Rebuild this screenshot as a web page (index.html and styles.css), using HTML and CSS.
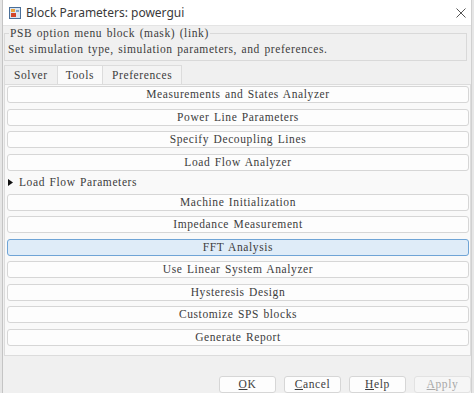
FILE: index.html
```html
<!DOCTYPE html>
<html lang="en">
<head>
    <title>Block Parameters: powergui</title>
    <meta charset="UTF-8">
    <link rel="stylesheet" href="styles.css">
</head>
<body>
    <div class="window">
        <div class="titlebar">
            <svg class="app-icon" width="12" height="12" viewBox="0 0 12 12">
                <rect x="0.5" y="0.5" width="11" height="11" fill="#dbe6f2" stroke="#4a6f99"/>
                <rect x="2" y="2" width="4" height="3" fill="#e9a23b"/>
                <rect x="2" y="6" width="5" height="4" fill="#d2462a"/>
                <rect x="7" y="3" width="3" height="2" fill="#7fa3c9"/>
            </svg>
            <span class="title">Block Parameters: powergui</span>
            <svg class="close" width="10" height="10" viewBox="0 0 10 10">
                <path d="M0.5 0.5 L9.5 9.5 M9.5 0.5 L0.5 9.5" stroke="#555" stroke-width="1"/>
            </svg>
        </div>

        <fieldset class="desc">
            <legend>PSB option menu block (mask) (link)</legend>
            <p>Set simulation type, simulation parameters, and preferences.</p>
        </fieldset>

        <div class="tabs">
            <div class="tab">Solver</div>
            <div class="tab active">Tools</div>
            <div class="tab">Preferences</div>
        </div>

        <div class="panel">
            <div class="btn">Measurements and States Analyzer</div>
            <div class="btn">Power Line Parameters</div>
            <div class="btn">Specify Decoupling Lines</div>
            <div class="btn">Load Flow Analyzer</div>
            <div class="section">
                <svg width="5" height="7" viewBox="0 0 5 7"><path d="M0 0 L5 3.5 L0 7 Z" fill="#111"/></svg>
                <span>Load Flow Parameters</span>
            </div>
            <div class="btn">Machine Initialization</div>
            <div class="btn">Impedance Measurement</div>
            <div class="btn hover">FFT Analysis</div>
            <div class="btn">Use Linear System Analyzer</div>
            <div class="btn">Hysteresis Design</div>
            <div class="btn">Customize SPS blocks</div>
            <div class="btn">Generate Report</div>
        </div>

        <div class="footer">
            <div class="btn dlg"><u>O</u>K</div>
            <div class="btn dlg"><u>C</u>ancel</div>
            <div class="btn dlg"><u>H</u>elp</div>
            <div class="btn dlg disabled"><u>A</u>pply</div>
        </div>
    </div>
</body>
</html>
```

FILE: styles.css
```css
body {
    margin: 0;
    background-color: #e6e6e6;
    font-family: "Liberation Serif", "Times New Roman", serif;
    font-size: 11.5px;
    letter-spacing: 0.6px;
    word-spacing: 1px;
    color: #3c3c3c;
}
.window {
    width: 468px;
    height: 393px;
    margin-left: 2px;
    background-color: #f0f0f0;
    border-left: 1px solid #c4c4c4;
    border-right: 1px solid #d0d0d0;
    overflow: hidden;
}
.titlebar {
    height: 25px;
    background-color: #fff;
    display: flex;
    align-items: center;
    padding-left: 6px;
    border-bottom: 1px solid #e4e4e4;
    font-family: "Noto Sans", sans-serif;
    font-size: 12px;
    letter-spacing: 0;
    word-spacing: 0;
    color: #3a3a3a;
}
.app-icon {
    margin-right: 5px;
}
.close {
    margin-left: auto;
    margin-right: 5px;
}
.desc {
    margin: 0 4px 0 1px;
    padding: 2px 3px 4px;
    border: 1px solid #d9d9d9;
}
.desc legend {
    margin-left: 1px;
    padding: 0 1px;
    line-height: 14px;
}
.desc p {
    margin: 0;
    line-height: 14px;
}
.tabs {
    display: flex;
    margin: 4px 0 0 1px;
    height: 19px;
}
.tab {
    padding: 0 9px;
    line-height: 19px;
    border: 1px solid #dcdcdc;
    border-bottom: none;
    border-right: none;
    background-color: #f0f0f0;
}
.tab:last-child {
    border-right: 1px solid #dcdcdc;
    background-color: #f3f3f3;
}
.tab.active {
    background-color: #fafafa;
    padding: 0 8px;
}
.panel {
    margin-left: 1px;
    display: flex;
    flex-direction: column;
    gap: 5.5px;
    padding: 1px 1px 9px 2px;
    border: 1px solid #dcdcdc;
    background-color: #f9f9f9;
}
.btn {
    height: 15px;
    line-height: 15px;
    text-align: center;
    background-color: #fdfdfd;
    border: 1px solid #d6d6d6;
    border-radius: 3px;
}
.btn.hover {
    background-color: #dfecf8;
    border-color: #6fa4d6;
}
.section {
    display: flex;
    align-items: center;
    gap: 6px;
    height: 12px;
    padding-left: 1px;
}
.footer {
    display: flex;
    justify-content: flex-end;
    gap: 8px;
    margin-top: 20px;
}
.btn.dlg {
    width: 55px;
}
.btn.disabled {
    color: #a8a8a8;
    background-color: #f6f6f6;
    border-color: #e2e2e2;
}
```
